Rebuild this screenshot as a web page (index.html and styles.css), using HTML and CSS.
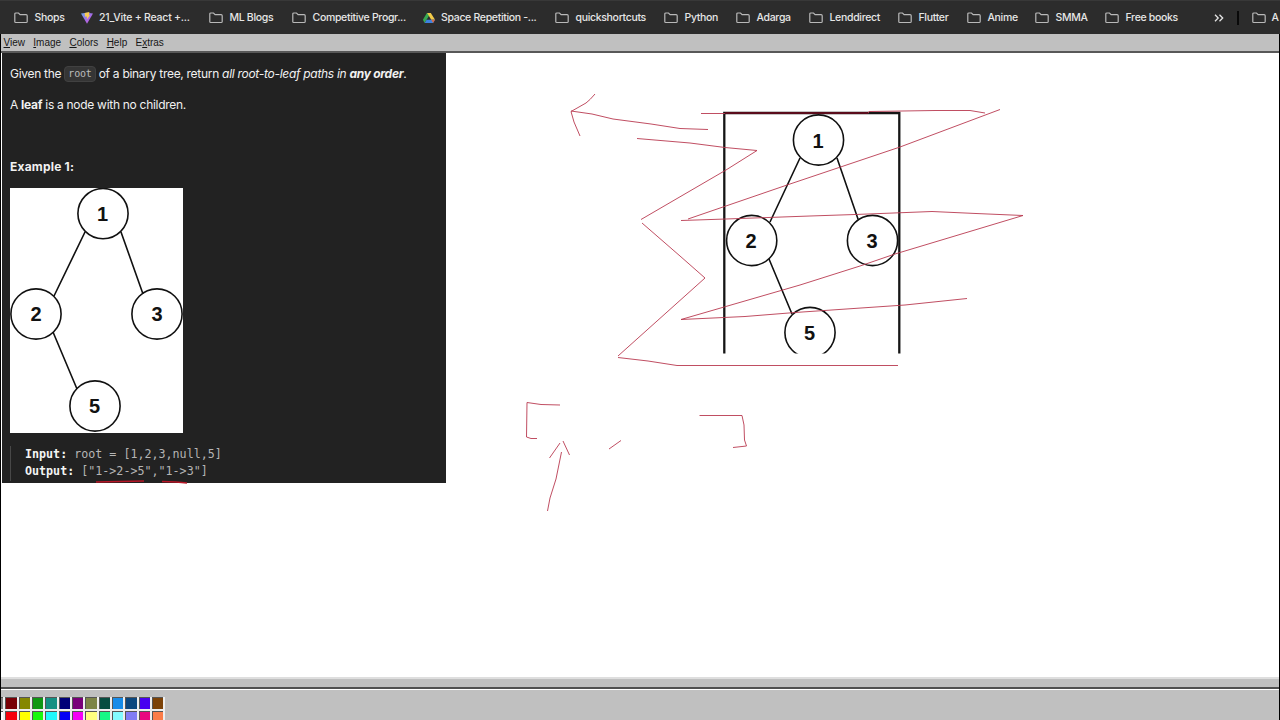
FILE: index.html
```html
<!DOCTYPE html>
<html lang="en">
<head>
<meta charset="utf-8">
<title>Paint - Binary Tree Paths</title>
<link rel="stylesheet" href="styles.css">
</head>
<body>
<svg class="defs" aria-hidden="true">
  <symbol id="folder" viewBox="0 0 14 12"><path d="M.8 9.7V2.1Q.8 1 1.9 1H4.5L6.1 2.6H12.1Q13.2 2.6 13.2 3.7V9.4Q13.2 10.5 12.1 10.5H1.7Q.8 10.5.8 9.7Z" fill="none" stroke="#b9b9b9" stroke-width="1.2"/></symbol>
</svg>
<nav class="bookmarks">
  <a class="bookmark"><svg class="icon"><use href="#folder"/></svg><span>Shops</span></a>
  <a class="bookmark vite"><svg class="icon" viewBox="0 0 14 13"><defs><linearGradient id="vg" x1="0" y1="0" x2="1" y2="1"><stop stop-color="#65a9e8"/><stop offset=".55" stop-color="#a76ae6"/><stop offset="1" stop-color="#d45bd8"/></linearGradient></defs><path d="M.5 1.5 7 .7 13.5 1.5 7 12.8Z" fill="url(#vg)"/><path d="M4.4 1 9.6 0 9 3.5 10.3 3.4 6.8 8 7 5 5 5.2Z" fill="#f7cb55"/></svg><span>21_Vite + React +...</span></a>
  <a class="bookmark"><svg class="icon"><use href="#folder"/></svg><span>ML Blogs</span></a>
  <a class="bookmark"><svg class="icon"><use href="#folder"/></svg><span>Competitive Progr...</span></a>
  <a class="bookmark drive"><svg class="icon" viewBox="0 0 14 13"><path d="M4.7 1H9L4.2 8.7 2.2 12 .4 8.5Z" fill="#37a852"/><path d="M5 1H9L13.5 8.5H9.4Z" fill="#f2ca48"/><path d="M4.4 8.5H13.5L11.4 12H2.3Z" fill="#3e82df"/><path d="M9.5 8.5H13.5L11.4 12Z" fill="#d86b45"/></svg><span>Space Repetition -...</span></a>
  <a class="bookmark"><svg class="icon"><use href="#folder"/></svg><span>quickshortcuts</span></a>
  <a class="bookmark"><svg class="icon"><use href="#folder"/></svg><span>Python</span></a>
  <a class="bookmark"><svg class="icon"><use href="#folder"/></svg><span>Adarga</span></a>
  <a class="bookmark"><svg class="icon"><use href="#folder"/></svg><span>Lenddirect</span></a>
  <a class="bookmark"><svg class="icon"><use href="#folder"/></svg><span>Flutter</span></a>
  <a class="bookmark"><svg class="icon"><use href="#folder"/></svg><span>Anime</span></a>
  <a class="bookmark"><svg class="icon"><use href="#folder"/></svg><span>SMMA</span></a>
  <a class="bookmark"><svg class="icon"><use href="#folder"/></svg><span>Free books</span></a>
  <svg class="more" viewBox="0 0 10 8"><path d="M1 .8 4.2 4 1 7.2M5.5.8 8.7 4 5.500 7.2" fill="none" stroke="#e4e4e4" stroke-width="1.3"/></svg>
  <i class="divider"></i>
  <a class="bookmark last"><svg class="icon"><use href="#folder"/></svg><span>A</span></a>
</nav>
<div class="app">
  <nav class="menu"><span><u>V</u>iew</span><span><u>I</u>mage</span><span><u>C</u>olors</span><span><u>H</u>elp</span><span>E<u>x</u>tras</span></nav>
  <main class="canvas">
    <section class="problem">
      <p class="statement">Given the <code class="chip">root</code> of a binary tree, return <em>all root-to-leaf paths in <b>any order</b></em>.</p>
      <p class="leaf">A <b>leaf</b> is a node with no children.</p>
      <h2 class="example">Example 1:</h2>
      <svg class="tree" viewBox="0 0 173 245">
        <g class="edges"><path d="M75 44 44 108M111 44 133 106M43 144 67 201"/></g>
        <g class="nodes"><circle cx="93" cy="25.600" r="25.1"/><circle cx="26" cy="126" r="25.1"/><circle cx="147" cy="126" r="25.1"/><circle cx="85" cy="218" r="25.1"/></g>
        <g class="labels"><text x="92.500" y="33">1</text><text x="26" y="133">2</text><text x="147" y="133">3</text><text x="84.500" y="225">5</text></g>
      </svg>
      <pre class="output"><b>Input:</b> root = [1,2,3,null,5]
<b>Output:</b> ["1-&gt;2-&gt;5","1-&gt;3"]</pre>
    </section>
    <svg class="drawing" viewBox="0 52 1280 625">
      <defs><clipPath id="cut"><rect x="720" y="100" width="185" height="253.500"/></clipPath></defs>
      <g clip-path="url(#cut)">
        <path class="frame" d="M724.300 354V113H899.300V354"/>
        <g class="edges"><path d="M800 158 770 222M837 158 858 219M769 259 792 314"/></g>
        <g class="nodes"><circle cx="818.500" cy="140" r="25.1"/><circle cx="751.700" cy="240.500" r="25.1"/><circle cx="872.500" cy="240.500" r="25.1"/><circle cx="810" cy="332.500" r="25.1"/></g>
        <g class="labels"><text x="818" y="147.500">1</text><text x="751" y="247.500">2</text><text x="872" y="247.500">3</text><text x="809.500" y="339.500">5</text></g>
      </g>
      <g class="pen">
        <path d="M595 94Q590 100 586 103L571 111.500 574 122 580 136M571 111 592 114 613 119 651 124 680 128.500 708 129.500"/>
        <path d="M637 138.500 690 143 725 147.500 757 150.500 726 170 641 219.500M642 223 680 256 705 278 618 356M618 357.500 648 361 677 365.500H898"/>
        <path d="M701 113.500H868L869 111.500 935 110.500H970L985 113M1000 109.500 900 147 790 184 688 219M681 220.500 726 219 810 216 855 214.500 932 211.500 976 213.500 1023 215.500 895 254 860 266 800 285 681 319.500 745 316.500 795 312.500 905 305 967 298.500"/>
        <path d="M560 405 541 404.500 527 402.500 526.500 437 531 438.500H537M699.500 415.500H742L744 425 744.500 440 746.500 446 733 447.500"/>
        <path d="M609 449 621 440.500M547.500 511 550 498 556 479 561.500 452M549.500 458 560 443M563 441 569.500 455"/>
      </g>
      <path class="top-line" d="M725 113H868"/>
      <path class="marks" d="M96 482 144 481M162 481.500 176 482 187 483"/>
    </svg>
  </main>
  <footer class="palette-bar">
    <div class="palette">
      <i class="swatch gray"></i><i class="swatch maroon"></i><i class="swatch olive"></i><i class="swatch green"></i><i class="swatch teal"></i><i class="swatch navy"></i><i class="swatch purple"></i><i class="swatch moss"></i><i class="swatch pine"></i><i class="swatch azure"></i><i class="swatch steel"></i><i class="swatch violet"></i><i class="swatch brown"></i>
      <i class="swatch white"></i><i class="swatch red"></i><i class="swatch yellow"></i><i class="swatch lime"></i><i class="swatch cyan"></i><i class="swatch blue"></i><i class="swatch magenta"></i><i class="swatch cream"></i><i class="swatch mint"></i><i class="swatch ice"></i><i class="swatch lavender"></i><i class="swatch pink"></i><i class="swatch orange"></i>
    </div>
  </footer>
</div>
</body>
</html>
```
FILE: styles.css
```css
* { box-sizing: border-box; }
body { margin: 0; width: 1280px; height: 720px; overflow: hidden; display: flex; flex-direction: column; background: #000; font-family: Inter, "Liberation Sans", sans-serif; }
.defs { position: absolute; width: 0; height: 0; }
.bookmarks { height: 34px; flex: none; background: #2c2c2c; border-top: 1px solid #383838; padding: 0 0 0 14px; overflow: hidden; display: grid; grid-template-columns: 67px 128px 83px 130px 133px 109px 72px 73px 89px 69px 68px 70px 109px 23px 15px 28px; align-items: center; }
.bookmark { display: flex; align-items: center; gap: 6.5px; color: #e6e6e6; font-size: 10.500px; font-weight: 500; letter-spacing: -.32px; white-space: nowrap; line-height: 14px; }
.bookmark .icon { width: 14px; height: 12px; flex: none; }
.bookmark.vite, .bookmark.drive { gap: 5px; }
.bookmark.vite { margin-left: -1px; letter-spacing: -.22px; }
.bookmark.last { gap: 5.500px; }
.more { width: 10px; height: 8px; }
.divider { width: 2px; height: 14px; background: #090909; }
.app { flex: 1; min-height: 0; margin: 0 1px; display: flex; flex-direction: column; background: #c0c0c0; }
.menu { height: 19px; flex: none; display: flex; gap: 8.300px; padding: 2px 0 0 2.500px; border-bottom: 2px solid #585858; font: 10px/13px "Liberation Sans", sans-serif; color: #161616; }
.menu u { text-decoration-thickness: 1px; text-underline-offset: 1px; }
.canvas { height: 624px; flex: none; background: #fff; padding-left: 1px; }
.problem { width: 444px; height: 430px; padding: 12px 8px 0; background: #222; color: #f1f1f1; font-size: 12px; line-height: 18px; letter-spacing: -.29px; }
.problem p, .problem h2 { margin: 0; white-space: nowrap; }
.problem .leaf { margin-top: 13px; }
.problem .example { margin-top: 44px; font-size: 12px; line-height: 18px; letter-spacing: .2px; }
.chip { display: inline-block; padding: 0 3px; height: 16px; line-height: 14px; border: 1px solid #414141; border-radius: 4px; background: #353535; color: #bcbcbc; font-family: "DejaVu Sans Mono", monospace; font-size: 10px; letter-spacing: -.2px; vertical-align: 1px; margin: -1px 0; }
.tree { display: block; width: 173px; height: 245px; margin-top: 12px; background: #fff; }
.output { margin: 13px 0 0; padding-left: 14px; height: 35px; border-left: 1px solid #484848; font: 11.680px/17px "DejaVu Sans Mono", monospace; letter-spacing: 0; color: #b5b5b5; }
.output b { color: #f4f4f4; }
.drawing { position: absolute; left: 0; top: 52px; width: 1280px; height: 625px; }
.edges, .nodes { fill: none; stroke: #111; stroke-width: 1.600; }
.labels { font: bold 20px "Liberation Sans", sans-serif; letter-spacing: 0; text-anchor: middle; fill: #111; }
.frame { fill: none; stroke: #151515; stroke-width: 2.300; }
.pen { fill: none; stroke: #b93a50; stroke-width: .9; }
.top-line { stroke: #5a0c1b; stroke-width: 1.800; }
.marks { fill: none; stroke: #b71626; stroke-width: 1.500; }
.palette-bar { flex: 1; border-top: 2px solid #dedede; overflow: hidden; background: linear-gradient(#c0c0c0 0 8px, #505050 8px 10px, #fff 10px 11px, #c0c0c0 11px); }
.palette { margin: 18px 0 0 -9px; display: grid; grid-template-columns: repeat(13, 13.330px); grid-auto-rows: 13.500px; }
.swatch { border: 1.500px solid #eee; border-width: 0 2px 2px 0; box-shadow: inset 1px 1px #555; }
.gray { background: #808080; }
.maroon { background: #780006; }
.olive { background: #858700; }
.green { background: #109713; }
.teal { background: #159083; }
.navy { background: #000078; }
.purple { background: #790079; }
.moss { background: #7d8446; }
.pine { background: #064c40; }
.azure { background: #168be9; }
.steel { background: #0c477e; }
.violet { background: #4800f0; }
.brown { background: #7c4207; }
.white { background: #fff; }
.red { background: #f6000b; }
.yellow { background: #ff0; }
.lime { background: #19f80c; }
.cyan { background: #20f8fb; }
.blue { background: #0500f4; }
.magenta { background: #f500f6; }
.cream { background: #ffff80; }
.mint { background: #16f986; }
.ice { background: #84fbff; }
.lavender { background: #817df5; }
.pink { background: #e90880; }
.orange { background: #fb7c48; }
```
